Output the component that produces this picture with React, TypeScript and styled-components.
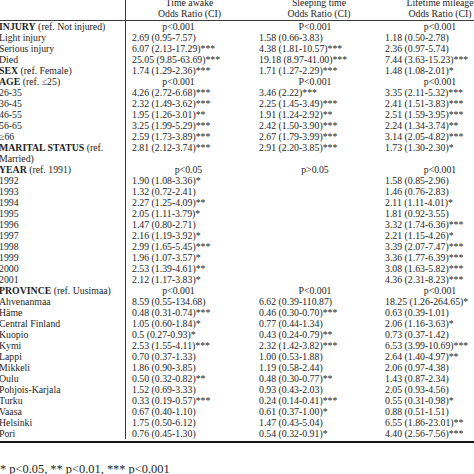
import styled, { createGlobalStyle } from "styled-components";

const GlobalStyle = createGlobalStyle`
  html, body {
    margin: 0;
    padding: 0;
    background: #ffffff;
  }
  body {
    overflow: hidden;
  }
`;

const Page = styled.div`
  width: 474px;
  height: 474px;
  overflow: hidden;
  background: #fff;
  color: #1e1e1e;
  font-family: "Liberation Serif", "Times New Roman", serif;
`;

const Table = styled.div`
  width: 496px;
  margin: -3px 0 0 -1px;
  border-bottom: 2px solid #151515;
  padding-bottom: 2px;
`;

const COLS = "126px 130px 126px 1fr";

const HeadRow = styled.div`
  display: grid;
  grid-template-columns: ${COLS};
  border-bottom: 1.5px solid #3a3a3a;
  font-size: 9.8px;
  line-height: 11px;
`;

const HeadCell = styled.div<{ $divider?: boolean; $nudge?: number }>`
  text-align: center;
  padding-bottom: 0.5px;
  border-left: ${(p) => (p.$divider ? "1px solid #3a3a3a" : "none")};
  padding-left: ${(p) => (p.$nudge && p.$nudge > 0 ? p.$nudge * 2 : 0)}px;
  padding-right: ${(p) => (p.$nudge && p.$nudge < 0 ? -p.$nudge * 2 : 0)}px;
  white-space: nowrap;
`;

const Row = styled.div`
  display: grid;
  grid-template-columns: ${COLS};
  font-size: 9.8px;
  line-height: 11px;
  height: 11px;
`;

const Label = styled.div`
  white-space: nowrap;
  b {
    font-weight: 700;
  }
`;

const Cell = styled.div<{ $divider?: boolean; $pad: number }>`
  white-space: nowrap;
  padding-left: ${(p) => p.$pad}px;
  border-left: ${(p) => (p.$divider ? "1px solid #3a3a3a" : "none")};
`;

const PCell = styled.div<{ $divider?: boolean; $shift: number }>`
  white-space: nowrap;
  text-align: center;
  border-left: ${(p) => (p.$divider ? "1px solid #3a3a3a" : "none")};
  padding-left: ${(p) => (p.$shift > 0 ? p.$shift * 2 : 0)}px;
  padding-right: ${(p) => (p.$shift < 0 ? -p.$shift * 2 : 0)}px;
`;

const Footnote = styled.div`
  margin-top: 19px;
  font-size: 12.4px;
  line-height: 14px;
  white-space: nowrap;
`;

type Val = string | [string, number];

interface TableRow {
  bold?: string;
  label: string;
  vals: Val[];
}

const rows: TableRow[] = [
  { bold: "INJURY", label: " (ref. Not injured)", vals: [["p<0.001", -12], ["P<0.001", -3], ["p<0.001", 2]] },
  { label: "Light injury", vals: ["2.69 (0.95-7.57)", "1.58 (0.66-3.83)", "1.18 (0.50-2.78)"] },
  { label: "Serious injury", vals: ["6.07 (2.13-17.29)***", "4.38 (1.81-10.57)***", "2.36 (0.97-5.74)"] },
  { label: "Died", vals: ["25.05 (9.85-63.69)***", "19.18 (8.97-41.00)***", "7.44 (3.63-15.23)***"] },
  { bold: "SEX", label: " (ref. Female)", vals: ["1.74 (1.29-2.36)***", "1.71 (1.27-2.29)***", "1.48 (1.08-2.01)*"] },
  { bold: "AGE", label: " (ref. ≤25)", vals: [["p<0.001", -12], ["P<0.001", -3], ["p<0.001", 2]] },
  { label: "26-35", vals: ["4.26 (2.72-6.68)***", "3.46 (2.22)***", "3.35 (2.11-5.32)***"] },
  { label: "36-45", vals: ["2.32 (1.49-3.62)***", "2.25 (1.45-3.49)***", "2.41 (1.51-3.83)***"] },
  { label: "46-55", vals: ["1.95 (1.26-3.01)**", "1.91 (1.24-2.92)**", "2.51 (1.59-3.95)***"] },
  { label: "56-65", vals: ["3.25 (1.99-5.29)***", "2.42 (1.50-3.90)***", "2.24 (1.34-3.74)**"] },
  { label: "≥66", vals: ["2.59 (1.73-3.89)***", "2.67 (1.79-3.99)***", "3.14 (2.05-4.82)***"] },
  { bold: "MARITAL STATUS", label: " (ref.", vals: ["2.81 (2.12-3.74)***", "2.91 (2.20-3.85)***", "1.73 (1.30-2.30)*"] },
  { label: "Married)", vals: ["", "", ""] },
  { bold: "YEAR", label: " (ref. 1991)", vals: [["p<0.05", -2], ["p>0.05", -3], ["p<0.001", 2]] },
  { label: "1992", vals: ["1.90 (1.08-3.36)*", "", "1.58 (0.85-2.96)"] },
  { label: "1993", vals: ["1.32 (0.72-2.41)", "", "1.46 (0.76-2.83)"] },
  { label: "1994", vals: ["2.27 (1.25-4.09)**", "", "2.11 (1.11-4.01)*"] },
  { label: "1995", vals: ["2.05 (1.11-3.79)*", "", "1.81 (0.92-3.55)"] },
  { label: "1996", vals: ["1.47 (0.80-2.71)", "", "3.32 (1.74-6.36)***"] },
  { label: "1997", vals: ["2.16 (1.19-3.92)*", "", "2.21 (1.15-4.26)*"] },
  { label: "1998", vals: ["2.99 (1.65-5.45)***", "", "3.39 (2.07-7.47)***"] },
  { label: "1999", vals: ["1.96 (1.07-3.57)*", "", "3.36 (1.77-6.39)***"] },
  { label: "2000", vals: ["2.53 (1.39-4.61)**", "", "3.08 (1.63-5.82)***"] },
  { label: "2001", vals: ["2.12 (1.17-3.83)*", "", "4.36 (2.31-8.23)***"] },
  { bold: "PROVINCE", label: " (ref. Uusimaa)", vals: [["p<0.001", -12], ["P<0.001", -3], ["p<0.001", 2]] },
  { label: "Ahvenanmaa", vals: ["8.59 (0.55-134.68)", "6.62 (0.39-110.87)", "18.25 (1.26-264.65)*"] },
  { label: "Häme", vals: ["0.48 (0.31-0.74)***", "0.46 (0.30-0.70)***", "0.63 (0.39-1.01)"] },
  { label: "Central Finland", vals: ["1.05 (0.60-1.84)*", "0.77 (0.44-1.34)", "2.06 (1.16-3.63)*"] },
  { label: "Kuopio", vals: ["0.5 (0.27-0.93)*", "0.43 (0.24-0.79)**", "0.73 (0.37-1.42)"] },
  { label: "Kymi", vals: ["2.53 (1.55-4.11)***", "2.32 (1.42-3.82)***", "6.53 (3.99-10.69)***"] },
  { label: "Lappi", vals: ["0.70 (0.37-1.33)", "1.00 (0.53-1.88)", "2.64 (1.40-4.97)**"] },
  { label: "Mikkeli", vals: ["1.86 (0.90-3.85)", "1.19 (0.58-2.44)", "2.06 (0.97-4.38)"] },
  { label: "Oulu", vals: ["0.50 (0.32-0.82)**", "0.48 (0.30-0.77)**", "1.43 (0.87-2.34)"] },
  { label: "Pohjois-Karjala", vals: ["1.52 (0.69-3.33)", "0.93 (0.43-2.03)", "2.05 (0.93-4.56)"] },
  { label: "Turku", vals: ["0.33 (0.19-0.57)***", "0.24 (0.14-0.41)***", "0.55 (0.31-0.98)*"] },
  { label: "Vaasa", vals: ["0.67 (0.40-1.10)", "0.61 (0.37-1.00)*", "0.88 (0.51-1.51)"] },
  { label: "Helsinki", vals: ["1.75 (0.50-6.12)", "1.47 (0.43-5.04)", "6.55 (1.86-23.01)**"] },
  { label: "Pori", vals: ["0.76 (0.45-1.30)", "0.54 (0.32-0.91)*", "4.40 (2.56-7.56)***"] },
];

const pads = [6, 4, 4];

const headers = [
  { title: "Time awake", nudge: -1 },
  { title: "Sleeping time", nudge: 1 },
  { title: "Lifetime mileage", nudge: 2 },
];

function App(): JSX.Element {
  return (
    <Page>
      <GlobalStyle />
      <Table>
        <HeadRow>
          <div />
          {headers.map((h, i) => (
            <HeadCell key={h.title} $divider={i === 0} $nudge={h.nudge}>
              {h.title}
              <br />
              Odds Ratio (CI)
            </HeadCell>
          ))}
        </HeadRow>
        {rows.map((r, ri) => (
          <Row key={ri}>
            <Label>
              {r.bold && <b>{r.bold}</b>}
              {r.label}
            </Label>
            {r.vals.map((v, ci) =>
              Array.isArray(v) ? (
                <PCell key={ci} $divider={ci === 0} $shift={v[1]}>
                  {v[0]}
                </PCell>
              ) : (
                <Cell key={ci} $divider={ci === 0} $pad={pads[ci]}>
                  {v}
                </Cell>
              )
            )}
          </Row>
        ))}
      </Table>
      <Footnote>* p&lt;0.05, ** p&lt;0.01, *** p&lt;0.001</Footnote>
    </Page>
  );
}

export default App;
